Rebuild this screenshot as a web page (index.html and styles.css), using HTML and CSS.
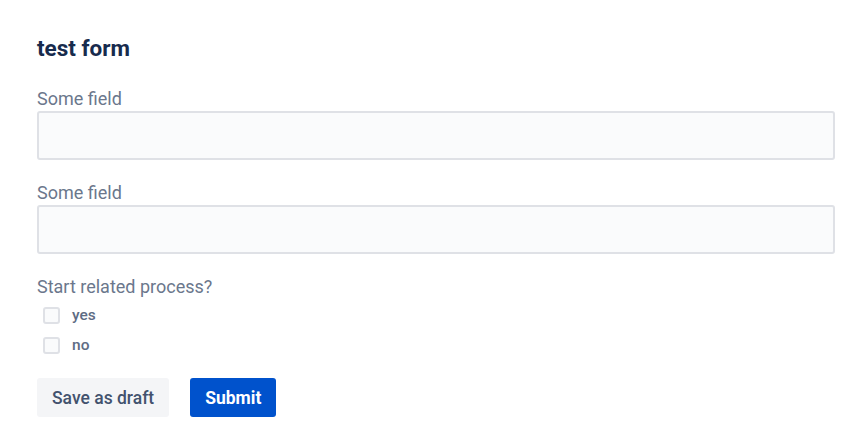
FILE: index.html
```html
<!DOCTYPE html>
<html>
<head>
<meta charset="utf-8">
<link rel="stylesheet" href="styles.css">
</head>
<body>
<form class="form">
  <h1 class="title">test form</h1>
  <div class="field">
    <label class="label">Some field</label>
    <input class="input" type="text">
  </div>
  <div class="field">
    <label class="label">Some field</label>
    <input class="input" type="text">
  </div>
  <div class="field">
    <div class="label">Start related process?</div>
    <label class="check"><span class="box"></span><span class="check-text">yes</span></label>
    <label class="check"><span class="box"></span><span class="check-text">no</span></label>
  </div>
  <div class="actions">
    <button type="button" class="btn btn-secondary">Save as draft</button>
    <button type="button" class="btn btn-primary">Submit</button>
  </div>
</form>
</body>
</html>
```
FILE: styles.css
```css
html, body {
  margin: 0;
  padding: 0;
  background: #ffffff;
}
body {
  font-family: Roboto, "Liberation Sans", sans-serif;
  color: #172b4d;
}
.form {
  padding: 36px 18px 0 37px;
  display: flex;
  flex-direction: column;
}
.title {
  margin: 0 0 29px 0;
  font-size: 22.5px;
  line-height: 24px;
  font-weight: 700;
  color: #172b4d;
}
.field {
  display: flex;
  flex-direction: column;
  margin-bottom: 23px;
}
.label {
  font-size: 18px;
  line-height: 20px;
  color: #6b778c;
  margin-bottom: 2px;
}
.input {
  box-sizing: border-box;
  height: 49px;
  width: 100%;
  margin: 0;
  border: 2px solid #dfe1e6;
  border-radius: 3px;
  background: #fafbfc;
  font-family: inherit;
  font-size: 16px;
  padding: 0 8px;
}
.check {
  display: flex;
  align-items: center;
  height: 30px;
  padding-left: 6px;
}
.check:first-of-type {
  margin-top: 1px;
}
.box {
  box-sizing: border-box;
  width: 17px;
  height: 17px;
  border: 2px solid #dfe1e6;
  border-radius: 3px;
  background: #fafbfc;
  margin-right: 12px;
}
.check-text {
  font-size: 15.5px;
  line-height: 20px;
  font-weight: 500;
  color: #5e6c84;
}
.actions {
  display: flex;
  gap: 21px;
  margin-top: -5px;
}
.btn {
  font-family: inherit;
  font-size: 17.5px;
  font-weight: 500;
  height: 39px;
  padding: 0 15px;
  border: none;
  border-radius: 3px;
  cursor: pointer;
}
.btn-secondary {
  background: #f4f5f7;
  color: #42526e;
}
.btn-primary {
  background: #0052cc;
  color: #ffffff;
  font-weight: 700;
}
```
